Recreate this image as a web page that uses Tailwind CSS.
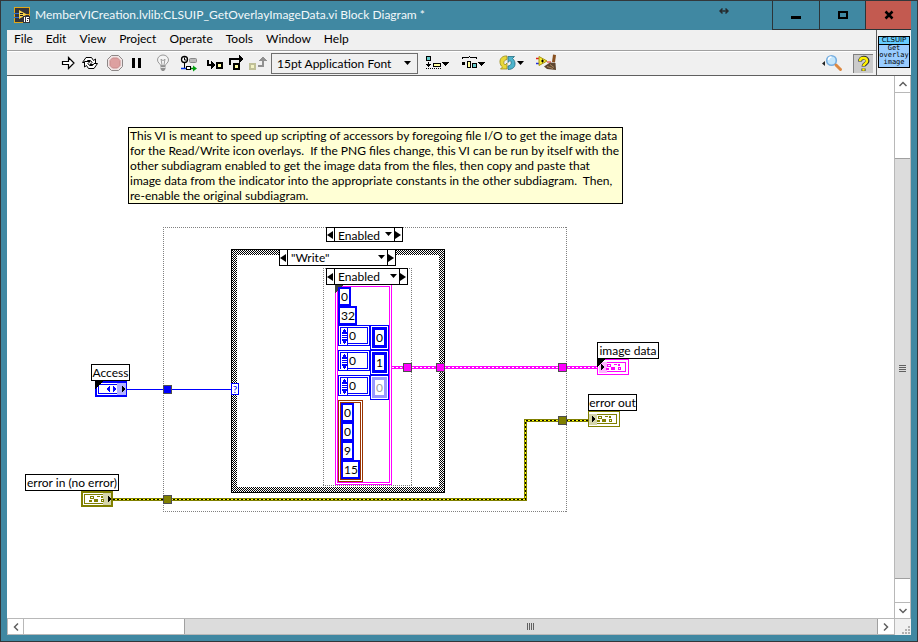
<!DOCTYPE html>
<html lang="en">
<head>
<meta charset="utf-8">
<title>CLSUIP_GetOverlayImageData.vi Block Diagram</title>
<script src="https://cdn.jsdelivr.net/npm/@tailwindcss/browser@4"></script>
</head>
<body class="h-screen overflow-hidden bg-[#2f3436] font-[Lato,'Open_Sans',sans-serif] text-[12px] leading-[15px] text-black">
<div class="flex h-full flex-col border border-[#33373a] bg-[#4088a2] px-1.5 pb-1.5">

  <!-- Title bar -->
  <header class="-mr-1.5 flex h-[29px] shrink-0 items-start pr-1.5">
    <svg class="mt-1.5 ml-[7px] h-4 w-4 shrink-0" viewBox="0 0 16 16" shape-rendering="crispEdges">
      <rect width="16" height="16" fill="#e0a818"/><rect x="1" y="1" width="14" height="14" fill="#33353a"/>
      <path d="M0 6.500h5M0 10.500h5" stroke="#2f6fd0"/><path d="M10 7.500h6" stroke="#e0a818"/>
      <path d="M5 3v9l8-4.500z" fill="#f6d04a" shape-rendering="auto"/><path d="M6 6.500h3M6 8.500h3" stroke="#222"/>
      <path d="M9 9h7v7H9z" fill="#33353a"/><path d="M10.500 10v5M12.500 10v5M12 10.500h3M12 12.500h3M12 14.500h3M14.500 12v3" stroke="#fff"/>
    </svg>
    <h1 class="ml-[5px] flex-1 whitespace-nowrap pt-[5px] leading-[17px] text-[#f2f8fa]">MemberVICreation.lvlib:CLSUIP_GetOverlayImageData.vi Block Diagram *</h1>
    <svg class="mt-[5px] mr-[43px] h-2.5 w-2.5" viewBox="0 0 10 10"><path d="M1 5h8M3.500 2.500L1 5l2.500 2.500M6.500 2.500L9 5l-2.500 2.500" fill="none" stroke="#262b2e" stroke-width="1.500"/></svg>
    <button aria-label="Minimize" class="flex h-full w-[47px] items-center justify-center border-b border-l border-[#2c3438]"><svg class="h-3 w-3" viewBox="0 0 12 12"><path d="M1 7h10v3H1z"/></svg></button>
    <button aria-label="Maximize" class="flex h-full w-[46px] items-center justify-center border-b border-l border-[#2c3438]"><svg class="h-3 w-3" viewBox="0 0 12 12"><path d="M2 3h8v6H2z" fill="none" stroke="#000" stroke-width="2"/></svg></button>
    <button aria-label="Close" class="flex h-full w-[46px] items-center justify-center border-b border-l border-[#2c3438] bg-[#c35a50]"><svg class="h-3 w-3" viewBox="0 0 12 12"><path d="M2.500 2.500l7 7M9.500 2.500l-7 7" stroke="#000" stroke-width="2.500"/></svg></button>
  </header>

  <!-- Menu, toolbar and VI icon -->
  <div class="flex h-[46px] shrink-0 border-b border-[#606060] bg-[#f0f0f0]">
    <div class="flex min-w-0 flex-1 flex-col">
      <nav class="flex h-5 items-start gap-[13px] pt-px pl-[7px]">
        <a href="#">File</a><a href="#">Edit</a><a href="#">View</a><a href="#">Project</a><a href="#">Operate</a><a href="#">Tools</a><a href="#">Window</a><a href="#">Help</a>
      </nav>
      <div class="flex flex-1 items-center border-t border-[#a0a0a0] pl-[50px] shadow-[inset_0_1px_0_#fff]">
        <button aria-label="Run"><svg class="h-5 w-[22px]" viewBox="0 0 22 20"><path d="M5.500 8.500h6v-4l5.500 5.500-5.500 5.500v-4h-6z" fill="#fff" stroke="#000" stroke-width="1.200"/></svg></button>
        <button aria-label="Run continuously"><svg class="h-5 w-[22px]" viewBox="0 0 22 20" fill="#fff" stroke="#000"><path d="M3.500 9.500L7 4.500h5.500l2 3 2-1.500v5.500h-5.500l2-2-1.500-2H8.500L7 9.500z"/><path d="M18.500 10.500L15 15.500H9.500l-2-3-2 1.500V8.500H11l-2 2 1.500 2h3L15 10.500z"/></svg></button>
        <button aria-label="Abort execution" class="ml-[3px]"><svg class="h-5 w-[22px]" viewBox="0 0 22 20"><path d="M7.500 2.500h7l4 4v7l-4 4h-7l-4-4v-7z" fill="#f0e4e4" stroke="#8d8787"/><path d="M8.500 5h5l2.500 2.500v5L13.500 15h-5L6 12.500v-5z" fill="#dda0a0" stroke="#c98b8b"/></svg></button>
        <button aria-label="Pause"><svg class="h-5 w-[22px]" viewBox="0 0 22 20" shape-rendering="crispEdges"><path d="M6 5h3v10H6zM12 5h3v10h-3z"/></svg></button>
        <button aria-label="Highlight execution" class="ml-1"><svg class="h-5 w-[22px]" viewBox="0 0 22 20"><path d="M8.500 12.500C8.500 10.500 5.500 10 5.500 7a5.500 5 0 0 1 11 0c0 3-3 3.500-3 5.500z" fill="#f4f4f4" stroke="#999"/><path d="M9 6l1 6M13 6l-1 6M9 6.500l2 1 2-1" fill="none" stroke="#888" stroke-width=".8"/><path d="M8.500 13h5v3l-1.500 2h-2l-1.500-2z" fill="#8f8f8f"/><path d="M8.500 14.500h5" stroke="#ddd"/></svg></button>
        <button aria-label="Retain wire values" class="ml-1"><svg class="h-5 w-[22px]" viewBox="0 0 22 20"><circle cx="6.500" cy="6.500" r="3" fill="#fff" stroke="#000" stroke-width="1.300"/><path d="M6.500 4.500v2.500h2M6.500 10v5" fill="none" stroke="#000"/><rect x="11.500" y="5.500" width="7" height="4" rx="1" fill="#bbb" stroke="#888"/><path d="M3 15.500h6" stroke="#0030e0" stroke-width="1.500"/><rect x="8.500" y="13.500" width="4" height="3" fill="#fff" stroke="#000"/><path d="M13 15.500h3" stroke="#080" stroke-width="1.500"/><path d="M15 12.500l4 3-4 3z" fill="#00a010"/></svg></button>
        <button aria-label="Step into" class="ml-[3px]"><svg class="h-5 w-[22px]" viewBox="0 0 22 20" shape-rendering="crispEdges"><path d="M5 7v5h5" fill="none" stroke="#000" stroke-width="2"/><path d="M8 8l5 4-5 4z"/><rect x="14" y="10" width="5" height="5" fill="#ffffa0" stroke="#000" stroke-width="2"/></svg></button>
        <button aria-label="Step over"><svg class="h-5 w-[22px]" viewBox="0 0 22 20" shape-rendering="crispEdges"><path d="M5 12V6h10" fill="none" stroke="#000" stroke-width="2"/><path d="M14 2l4 4-4 4z"/><rect x="9" y="11" width="5" height="5" fill="#ffffa0" stroke="#000" stroke-width="2"/></svg></button>
        <button aria-label="Step out"><svg class="h-5 w-[22px]" viewBox="0 0 22 20" shape-rendering="crispEdges"><path d="M11 13h5V7" fill="none" stroke="#909090" stroke-width="2"/><path d="M12 8l4-5 4 5z" fill="#909090"/><rect x="3" y="11" width="5" height="5" fill="#f3f3c4" stroke="#c0c098" stroke-width="2"/></svg></button>
        <div class="relative ml-0.5">
          <select aria-label="Text settings" class="h-[21px] w-[147px] appearance-none border border-[#6e6e6e] bg-[#f0f0f0] pl-[5px] outline-none"><option>15pt Application Font</option></select>
          <svg class="pointer-events-none absolute top-2 right-[7px] h-1 w-[7px]" viewBox="0 0 7 4"><path d="M0 0h7L3.500 4z"/></svg>
        </div>
        <button aria-label="Align objects" class="ml-[7px]"><svg class="h-5 w-6" viewBox="0 0 24 20" shape-rendering="crispEdges"><rect x="1.500" y="3.500" width="4" height="4" fill="#6cc" stroke="#000"/><path d="M3.500 9v3" stroke="#000"/><path d="M1 11h5l-2.500 3z"/><path d="M1 15.500h16" stroke="#000" stroke-dasharray="1 1"/><rect x="8.500" y="10.500" width="7" height="3" fill="#ffffa0" stroke="#000"/><path d="M17 9h7l-3.500 4z"/></svg></button>
        <button aria-label="Distribute objects" class="ml-3"><svg class="h-5 w-6" viewBox="0 0 24 20" shape-rendering="crispEdges"><path d="M1.500 6V4.500h6l1-1 1 1h6V6" fill="none" stroke="#000"/><path d="M1 9h3v3H1z"/><rect x="6.500" y="8.500" width="3" height="6" fill="#ffffa0" stroke="#000"/><rect x="11.500" y="10.500" width="4" height="4" fill="#6cc" stroke="#000"/><path d="M17 9h7l-3.500 4z"/></svg></button>
        <button aria-label="Reorder" class="ml-3.5"><svg class="h-5 w-[26px]" viewBox="0 0 26 20"><path d="M8 3C3.500 2.500.5 5.500 1 9.500c.2 2 1.200 3.500 2.500 4.500l-2 2H8v-6l-2 2C4 10.500 4.500 7 8 6.500z" fill="#e8d838" stroke="#97891c" stroke-width=".8"/><path d="M9 16.500c4.500 0 7.500-2.500 7-6.500-.2-2-1.200-3.500-2.500-4.500l2-2H9v6l2-2c2 1.500 1.500 5-2 5.500z" fill="#4db4cc" stroke="#246c80" stroke-width=".8"/><path d="M18 8h7l-3.500 4z"/></svg></button>
        <button aria-label="Clean up diagram" class="ml-[11px]"><svg class="h-5 w-[22px]" viewBox="0 0 22 20"><path d="M0 5.500h4" stroke="#e02020" stroke-width="1.500"/><path d="M0 10.500h4" stroke="#2030e0" stroke-width="1.500"/><path d="M3 3.500v9l8-4.500z" fill="#f8ec30" stroke="#a89410"/><path d="M5 8h3M6.500 6.500v3" stroke="#000"/><path d="M11 9h4" stroke="#e02020"/><path d="M17 1.500l3 .5-1 7.500-3-.5z" fill="#8a5220"/><path d="M14 9.500l5.500.5.500 7-9-1-3-2.500z" fill="#5e4630"/><path d="M11 13.500l6 2M14 11.500l4 3" stroke="#a98860"/></svg></button>
        <span class="flex-1"></span>
        <button aria-label="Search"><svg class="h-5 w-6" viewBox="0 0 24 20"><path d="M5 8v5L2 10.500z" fill="#222"/><circle cx="11.500" cy="7.500" r="4.800" fill="#c4e6fb" stroke="#76aee0" stroke-width="1.600"/><path d="M8.500 7a3 3 0 0 1 3-3" stroke="#fff" stroke-width="1.500" fill="none"/><path d="M16 12l4.500 4.500" stroke="#dd8840" stroke-width="3" stroke-linecap="round"/></svg></button>
        <button aria-label="Context help" class="mr-[3px] ml-[9px] h-[19px] w-5 border-t border-l border-[#808080] bg-[#cbcbcb]"><svg class="h-[18px] w-[19px]" viewBox="0 0 19 18"><path d="M6 6.500C6 1.500 13.500 1.500 13.500 6c0 3-4 2.500-4 5.500M9.500 13.500v2.500" fill="none" stroke="#333" stroke-width="4"/><path d="M6 6C6 2 13 2 13 6c0 3-3.500 2.500-3.500 5M9.500 13.500v2.300" fill="none" stroke="#fff200" stroke-width="2.500"/></svg></button>
      </div>
    </div>
    <div class="flex w-[35px] items-center border-l border-[#606060] pb-1 pl-px">
      <div class="mt-0.5 h-8 w-8 border border-black bg-[#99ccff] text-center font-['DejaVu_Sans_Mono',monospace] text-[7px] leading-[8px]">
        <div class="h-2 border-b border-black bg-[#66ccff] font-['DejaVu_Sans',sans-serif] leading-[7px]">CLSUIP</div>
        <div class="leading-[7px]">Get<br>overlay<br>image</div>
      </div>
    </div>
  </div>

  <!-- Workspace: diagram and scroll bars -->
  <main class="grid min-h-0 flex-1 grid-cols-[minmax(0,1fr)_17px] grid-rows-[minmax(0,1fr)_17px] bg-white">
    <section class="relative overflow-hidden bg-white" aria-label="Block diagram">
      <svg class="absolute top-0 left-0 h-[542px] w-[887px]" viewBox="7 76 887 542" fill="none" shape-rendering="crispEdges">
        <defs>
          <pattern id="hatch" width="2" height="2" patternUnits="userSpaceOnUse"><rect width="2" height="2" fill="#fff"/><path d="M0 0h1v1H0zM1 1h1v1H1z" fill="#000"/></pattern>
          <g id="cluster"><path fill-rule="evenodd" d="M9 5h4v3H9zM10 6v1h2V6zM16 5h3v1h-3zM20 5h2v2h-2zM8 9h3v2H8zM13 8h4v3h-4zM20 8h3v3h-3zM21 9v1h1V9z"/></g>
        </defs>
        <!-- disable structures -->
        <g stroke="#808080" stroke-dasharray="1 1"><path d="M163 227.500h404M163 511.500h404M163.500 227v285M566.500 227v285"/><path d="M323 268.500h89M323 485.500h89M323.500 268v218M411.500 268v218"/></g>
        <!-- case structure -->
        <path fill-rule="evenodd" fill="url(#hatch)" d="M231 249h214v244H231zM237 255v232h202V255z"/>
        <rect x="231.500" y="249.500" width="213" height="243" stroke="#000"/>
        <!-- access wire -->
        <path d="M127 389.500h104" stroke="#00f"/>
        <rect x="163.500" y="385.500" width="8" height="8" fill="#00f" stroke="#4d4d4d"/>
        <!-- error wire -->
        <path d="M113 499.500h412.500v-79H588" stroke="#808000" stroke-width="3"/>
        <path d="M113 499.500h412.500v-79H588" stroke="#ff0"/><path d="M113 499.500h412.500v-79H588" stroke="#000" stroke-dasharray="2 2"/>
        <g fill="#808000" stroke="#4d4d4d"><rect x="163.500" y="495.500" width="8" height="8"/><rect x="558.500" y="416.500" width="8" height="8"/></g>
        <!-- image data wire -->
        <path d="M392 367.500h205" stroke="#f0f" stroke-width="3"/><path d="M392 367.500h205" stroke="#fff" stroke-dasharray="2 2"/>
        <g fill="#f0f" stroke="#4d4d4d"><rect x="403.500" y="363.500" width="8" height="8"/><rect x="436.500" y="363.500" width="8" height="8"/><rect x="558.500" y="363.500" width="8" height="8"/></g>
        <!-- cluster constant -->
        <rect x="335.500" y="284.500" width="56" height="200" fill="#fff" stroke="#f0f"/><rect x="337.500" y="286.500" width="52" height="196" stroke="#f0f"/>
        <path d="M335 285h8l-8 8z" fill="#404040"/>
        <rect x="338.500" y="400.500" width="24" height="81" fill="#fff" stroke="#993300"/><rect x="340.500" y="402.500" width="20" height="77" stroke="#993300"/>
        <!-- access terminal -->
        <rect x="96" y="382" width="30" height="14" fill="#fff" stroke="#00f" stroke-width="2"/><rect x="98.500" y="384.500" width="26" height="9" stroke="#00f"/>
        <path d="M117 383h9v12h-9z" fill="#b3b3ff"/><path d="M110 386v6l-4-3zM113 386v6l4-3z" fill="#00f"/><path d="M122 386v6l3-3zM95 381h8l-8 8z" fill="#000"/>
        <!-- error in terminal -->
        <g transform="translate(81 491)"><rect x="1" y="1" width="30" height="14" fill="#fff" stroke="#808000" stroke-width="2"/><rect x="3.500" y="3.500" width="25" height="9" stroke="#808000"/><path d="M22 2h8v12h-8z" fill="#d5d5ab"/><use href="#cluster" fill="#808000"/><path d="M27 5v6l3-3z" fill="#000"/></g>
        <!-- image data terminal -->
        <g transform="translate(597 359)"><rect x=".5" y=".5" width="31" height="15" fill="#fff" stroke="#f0f"/><rect x="3.500" y="3.500" width="25" height="9" stroke="#f0f"/><path d="M2 3h8v11H2z" fill="#ffb3ff"/><use href="#cluster" x="1" fill="#f0f"/><path d="M4 5v6l3-3zM0 0h8L0 8z" fill="#000"/></g>
        <!-- error out terminal -->
        <g transform="translate(588 411)"><rect x=".5" y=".5" width="31" height="15" fill="#fff" stroke="#808000"/><rect x="3.500" y="3.500" width="25" height="9" stroke="#808000"/><path d="M1 3h8v11H1z" fill="#d5d5ab"/><use href="#cluster" x="1" fill="#808000"/><path d="M4 5v6l3-3z" fill="#000"/></g>
      </svg>

      <p class="absolute top-[51px] left-[121px] h-[77px] w-[495px] border border-black bg-[#ffffd5] px-px whitespace-pre">This VI is meant to speed up scripting of accessors by foregoing file I/O to get the image data
for the Read/Write icon overlays.  If the PNG files change, this VI can be run by itself with the
other subdiagram enabled to get the image data from the files, then copy and paste that
image data from the indicator into the appropriate constants in the other subdiagram.  Then,
re-enable the original subdiagram.</p>

      <!-- structure selectors -->
      <div class="absolute top-[151px] left-[319px] flex h-[15px] w-[77px] border border-black bg-white">
        <button aria-label="Previous subdiagram" class="flex w-2 shrink-0 items-center border-r border-black"><svg class="h-2 w-1.5" viewBox="0 0 6 8"><path d="M6 0v8L0 4z"/></svg></button>
        <div class="relative flex flex-1"><select aria-label="Outer subdiagram" class="w-full appearance-none pl-[3px]"><option>Enabled</option></select><svg class="pointer-events-none absolute top-1 right-0.5 h-1 w-[7px]" viewBox="0 0 7 4"><path d="M0 0h7L3.500 4z"/></svg></div>
        <button aria-label="Next subdiagram" class="flex w-2 shrink-0 items-center border-l border-black"><svg class="h-2 w-1.5" viewBox="0 0 6 8"><path d="M0 0v8l6-4z"/></svg></button>
      </div>
      <div class="absolute top-[173px] left-[272px] flex h-[17px] w-[117px] border border-black bg-white">
        <button aria-label="Previous case" class="flex w-2 shrink-0 items-center border-r border-black"><svg class="h-2 w-1.5" viewBox="0 0 6 8"><path d="M6 0v8L0 4z"/></svg></button>
        <div class="relative flex flex-1"><select aria-label="Case" class="w-full appearance-none pl-[3px]"><option>"Write"</option></select><svg class="pointer-events-none absolute top-[5px] right-0.5 h-1 w-[7px]" viewBox="0 0 7 4"><path d="M0 0h7L3.500 4z"/></svg></div>
        <button aria-label="Next case" class="flex w-2 shrink-0 items-center border-l border-black"><svg class="h-2 w-1.5" viewBox="0 0 6 8"><path d="M0 0v8l6-4z"/></svg></button>
      </div>
      <div class="absolute top-[192px] left-[319px] flex h-[17px] w-[82px] border border-black bg-white">
        <button aria-label="Previous inner subdiagram" class="flex w-2 shrink-0 items-center border-r border-black"><svg class="h-2 w-1.5" viewBox="0 0 6 8"><path d="M6 0v8L0 4z"/></svg></button>
        <div class="relative flex flex-1"><select aria-label="Inner subdiagram" class="w-full appearance-none pl-[3px]"><option>Enabled</option></select><svg class="pointer-events-none absolute top-[5px] right-0.5 h-1 w-[7px]" viewBox="0 0 7 4"><path d="M0 0h7L3.500 4z"/></svg></div>
        <button aria-label="Next inner subdiagram" class="flex w-2 shrink-0 items-center border-l border-black"><svg class="h-2 w-1.5" viewBox="0 0 6 8"><path d="M0 0v8l6-4z"/></svg></button>
      </div>
      <span class="absolute top-[307px] left-[224px] h-3 w-2 border border-[#0000ff] bg-white text-center text-[10px] leading-[10px] text-[#0000ff]">?</span>

      <!-- cluster contents -->
      <div class="absolute top-[211px] left-[331px] flex flex-col items-start">
        <input aria-label="Image type" value="0" class="h-[19px] w-[13px] border-2 border-[#0000ff] bg-white pl-px">
        <input aria-label="Image depth" value="32" class="h-[19px] w-[19px] border-2 border-[#0000ff] bg-white pl-px">
        <div class="flex h-[25px] items-start">
          <div class="flex h-[21px] w-8 border border-[#0000ff] p-px"><div class="flex flex-1 border border-[#0000ff]"><svg class="h-[17px] w-[7px] shrink-0" viewBox="0 0 7 17" shape-rendering="crispEdges"><path d="M0 0h7v17H0z" fill="#fff"/><path d="M3 1h1v1h1v2h1v2H1V4h1V2h1zM1 7h5v1H1zM1 9h5v1H1zM1 11h5v2H5v2H4v1H3v-1H2v-2H1zM6 0h1v17H6z" fill="#00f"/></svg><input aria-label="Image index" value="0" class="w-4 pl-px leading-[15px]"></div></div>
          <div class="h-[25px] w-[19px] border border-[#0000ff] p-px"><input aria-label="Image element" value="0" class="h-[21px] w-[15px] border-3 border-[#0000ff] pl-px"></div>
        </div>
        <div class="flex h-[25px] items-start">
          <div class="flex h-[21px] w-8 border border-[#0000ff] p-px"><div class="flex flex-1 border border-[#0000ff]"><svg class="h-[17px] w-[7px] shrink-0" viewBox="0 0 7 17" shape-rendering="crispEdges"><path d="M0 0h7v17H0z" fill="#fff"/><path d="M3 1h1v1h1v2h1v2H1V4h1V2h1zM1 7h5v1H1zM1 9h5v1H1zM1 11h5v2H5v2H4v1H3v-1H2v-2H1zM6 0h1v17H6z" fill="#00f"/></svg><input aria-label="Mask index" value="0" class="w-4 pl-px leading-[15px]"></div></div>
          <div class="h-[25px] w-[19px] border border-[#0000ff] p-px"><input aria-label="Mask element" value="1" class="h-[21px] w-[15px] border-3 border-[#0000ff] pl-px"></div>
        </div>
        <div class="flex h-[25px] items-start">
          <div class="flex h-[21px] w-8 border border-[#0000ff] p-px"><div class="flex flex-1 border border-[#0000ff]"><svg class="h-[17px] w-[7px] shrink-0" viewBox="0 0 7 17" shape-rendering="crispEdges"><path d="M0 0h7v17H0z" fill="#fff"/><path d="M3 1h1v1h1v2h1v2H1V4h1V2h1zM1 7h5v1H1zM1 9h5v1H1zM1 11h5v2H5v2H4v1H3v-1H2v-2H1zM6 0h1v17H6z" fill="#00f"/></svg><input aria-label="Colors index" value="0" class="w-4 pl-px leading-[15px]"></div></div>
          <div class="h-[25px] w-[19px] border border-[#0000ff] p-px"><input aria-label="Colors element" value="0" disabled class="h-[21px] w-[15px] border-3 border-[#9999ff] pl-px text-[#a0a0a0]"></div>
        </div>
      </div>
      <div class="absolute top-[327px] left-[334px] flex flex-col items-start" aria-label="Rectangle">
        <input aria-label="Left" value="0" class="h-[19px] w-[13px] border-2 border-[#0000ff] bg-white pl-px">
        <input aria-label="Top" value="0" class="h-[19px] w-[13px] border-2 border-[#0000ff] bg-white pl-px">
        <input aria-label="Right" value="9" class="h-[19px] w-[13px] border-2 border-[#0000ff] bg-white pl-px">
        <input aria-label="Bottom" value="15" class="h-[19px] w-[19px] border-2 border-[#0000ff] bg-white pl-px">
      </div>

      <!-- terminal labels -->
      <span class="absolute top-[288px] left-[84px] h-[17px] w-[39px] border border-black bg-white text-center whitespace-nowrap">Access</span>
      <span class="absolute top-[398px] left-[18px] h-[17px] w-[94px] border border-black bg-white text-center whitespace-nowrap">error in (no error)</span>
      <span class="absolute top-[266px] left-[590px] h-[17px] w-[62px] border border-black bg-white text-center whitespace-nowrap">image data</span>
      <span class="absolute top-[318px] left-[581px] h-[17px] w-[49px] border border-black bg-white text-center whitespace-nowrap">error out</span>
    </section>

    <!-- vertical scroll bar -->
    <div class="flex flex-col border-x border-[#b8b8b8] bg-white">
      <button aria-label="Scroll up" class="flex h-[17px] shrink-0 items-center justify-center border-b border-[#b8b8b8]"><svg class="h-2.5 w-2.5" viewBox="0 0 10 10"><path d="M1.500 7L5 3.500 8.500 7" fill="none" stroke="#606060" stroke-width="1.500"/></svg></button>
      <div class="basis-[65px]"></div>
      <div class="flex flex-1 items-center justify-center border-y border-[#a0a0a0] bg-[#dcdcdc]"><svg class="h-2 w-[7px]" viewBox="0 0 7 8" shape-rendering="crispEdges"><path d="M0 0h7v1H0zM0 2h7v1H0zM0 4h7v1H0zM0 6h7v1H0z" fill="#606060"/></svg></div>
      <div class="basis-[23px]"></div>
      <button aria-label="Scroll down" class="flex h-4 shrink-0 items-center justify-center border-t border-[#b8b8b8]"><svg class="h-2.5 w-2.5" viewBox="0 0 10 10"><path d="M1.500 3L5 6.500 8.500 3" fill="none" stroke="#606060" stroke-width="1.500"/></svg></button>
    </div>
    <!-- horizontal scroll bar -->
    <div class="flex border-y border-[#b8b8b8] bg-white">
      <button aria-label="Scroll left" class="flex w-[17px] shrink-0 items-center justify-center border-x border-[#b8b8b8]"><svg class="h-2.5 w-2.5" viewBox="0 0 10 10"><path d="M7 1.500L3.500 5 7 8.500" fill="none" stroke="#606060" stroke-width="1.500"/></svg></button>
      <div class="basis-40"></div>
      <div class="flex flex-1 items-center justify-center border-x border-[#a0a0a0] bg-[#dcdcdc]"><svg class="h-[7px] w-2" viewBox="0 0 8 7" shape-rendering="crispEdges"><path d="M0 0v7h1V0zM2 0v7h1V0zM4 0v7h1V0zM6 0v7h1V0z" fill="#606060"/></svg></div>
      <button aria-label="Scroll right" class="flex w-4 shrink-0 items-center justify-center"><svg class="h-2.5 w-2.5" viewBox="0 0 10 10"><path d="M3 1.500L6.500 5 3 8.500" fill="none" stroke="#606060" stroke-width="1.500"/></svg></button>
    </div>
    <div class="flex items-end justify-end border-t border-l border-[#b8b8b8] bg-[#f0f0f0] p-px"><svg class="h-2 w-2" viewBox="0 0 8 8" fill="#b0b0b0"><path d="M6 0h2v2H6zM3 3h2v2H3zM6 3h2v2H6zM0 6h2v2H0zM3 6h2v2H3zM6 6h2v2H6z"/></svg></div>
  </main>
</div>
</body>
</html>
